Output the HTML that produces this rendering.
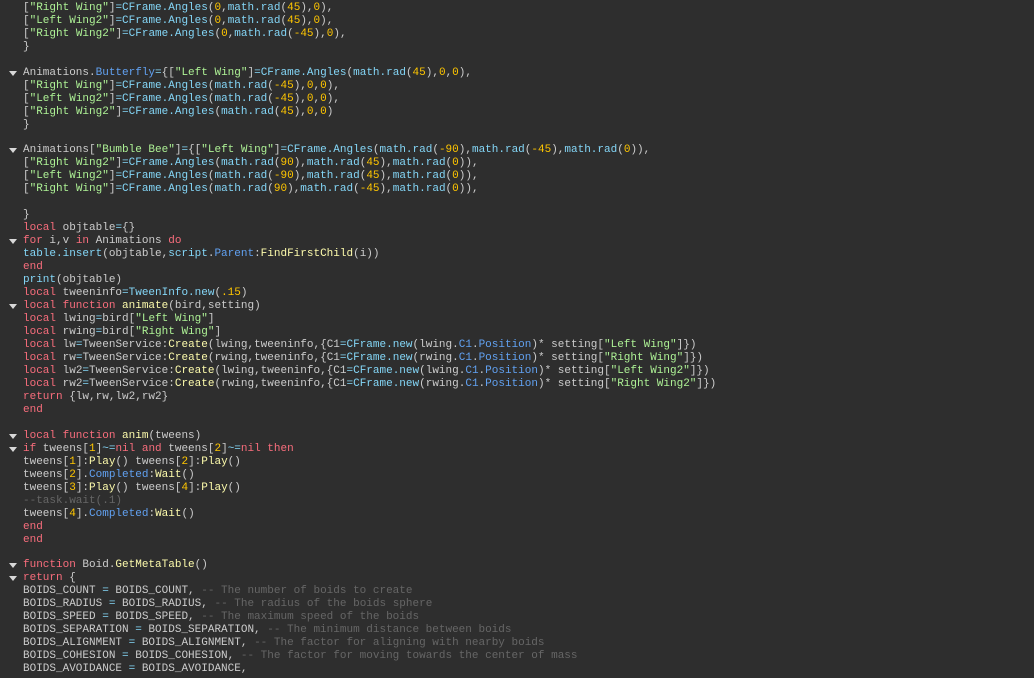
<!DOCTYPE html>
<html><head><meta charset="utf-8"><style>
html,body{margin:0;padding:0;background:#2e2e2e;width:1034px;height:678px;overflow:hidden}
#ed{position:absolute;left:23px;top:1.8px;font-family:"Liberation Mono",monospace;font-size:11px;color:#cccccc}
.l{height:12.97px;line-height:12.97px;position:relative;white-space:pre}
.a:before{content:"";position:absolute;left:-14px;top:4px;border-left:4px solid transparent;border-right:4px solid transparent;border-top:5px solid #d8d8d8}
.k{color:#f86d7c}.s{color:#adf195}.n{color:#ffc600}.b{color:#84d6f7}.p{color:#61a1f1}.f{color:#fdfbac}.c{color:#666666}
</style></head><body><div id="ed">
<div class="l">[<span class="s">"Right Wing"</span>]<span class="b">=CFrame.Angles</span>(<span class="n">0</span>,<span class="b">math.rad</span>(<span class="n">45</span>),<span class="n">0</span>),</div>
<div class="l">[<span class="s">"Left Wing2"</span>]<span class="b">=CFrame.Angles</span>(<span class="n">0</span>,<span class="b">math.rad</span>(<span class="n">45</span>),<span class="n">0</span>),</div>
<div class="l">[<span class="s">"Right Wing2"</span>]<span class="b">=CFrame.Angles</span>(<span class="n">0</span>,<span class="b">math.rad</span>(<span class="n">-45</span>),<span class="n">0</span>),</div>
<div class="l">}</div>
<div class="l"> </div>
<div class="l a">Animations.<span class="p">Butterfly</span><span class="b">=</span>{[<span class="s">"Left Wing"</span>]<span class="b">=CFrame.Angles</span>(<span class="b">math.rad</span>(<span class="n">45</span>),<span class="n">0</span>,<span class="n">0</span>),</div>
<div class="l">[<span class="s">"Right Wing"</span>]<span class="b">=CFrame.Angles</span>(<span class="b">math.rad</span>(<span class="n">-45</span>),<span class="n">0</span>,<span class="n">0</span>),</div>
<div class="l">[<span class="s">"Left Wing2"</span>]<span class="b">=CFrame.Angles</span>(<span class="b">math.rad</span>(<span class="n">-45</span>),<span class="n">0</span>,<span class="n">0</span>),</div>
<div class="l">[<span class="s">"Right Wing2"</span>]<span class="b">=CFrame.Angles</span>(<span class="b">math.rad</span>(<span class="n">45</span>),<span class="n">0</span>,<span class="n">0</span>)</div>
<div class="l">}</div>
<div class="l"> </div>
<div class="l a">Animations[<span class="s">"Bumble Bee"</span>]<span class="b">=</span>{[<span class="s">"Left Wing"</span>]<span class="b">=CFrame.Angles</span>(<span class="b">math.rad</span>(<span class="n">-90</span>),<span class="b">math.rad</span>(<span class="n">-45</span>),<span class="b">math.rad</span>(<span class="n">0</span>)),</div>
<div class="l">[<span class="s">"Right Wing2"</span>]<span class="b">=CFrame.Angles</span>(<span class="b">math.rad</span>(<span class="n">90</span>),<span class="b">math.rad</span>(<span class="n">45</span>),<span class="b">math.rad</span>(<span class="n">0</span>)),</div>
<div class="l">[<span class="s">"Left Wing2"</span>]<span class="b">=CFrame.Angles</span>(<span class="b">math.rad</span>(<span class="n">-90</span>),<span class="b">math.rad</span>(<span class="n">45</span>),<span class="b">math.rad</span>(<span class="n">0</span>)),</div>
<div class="l">[<span class="s">"Right Wing"</span>]<span class="b">=CFrame.Angles</span>(<span class="b">math.rad</span>(<span class="n">90</span>),<span class="b">math.rad</span>(<span class="n">-45</span>),<span class="b">math.rad</span>(<span class="n">0</span>)),</div>
<div class="l"> </div>
<div class="l">}</div>
<div class="l"><span class="k">local</span> objtable<span class="b">=</span>{}</div>
<div class="l a"><span class="k">for</span> i,v <span class="k">in</span> Animations <span class="k">do</span></div>
<div class="l"><span class="b">table.insert</span>(objtable,<span class="b">script</span>.<span class="p">Parent</span>:<span class="f">FindFirstChild</span>(i))</div>
<div class="l"><span class="k">end</span></div>
<div class="l"><span class="b">print</span>(objtable)</div>
<div class="l"><span class="k">local</span> tweeninfo<span class="b">=TweenInfo.new</span>(<span class="n">.15</span>)</div>
<div class="l a"><span class="k">local function</span> <span class="f">animate</span>(bird,setting)</div>
<div class="l"><span class="k">local</span> lwing<span class="b">=</span>bird[<span class="s">"Left Wing"</span>]</div>
<div class="l"><span class="k">local</span> rwing<span class="b">=</span>bird[<span class="s">"Right Wing"</span>]</div>
<div class="l"><span class="k">local</span> lw<span class="b">=</span>TweenService:<span class="f">Create</span>(lwing,tweeninfo,{C1<span class="b">=CFrame.new</span>(lwing.<span class="p">C1</span>.<span class="p">Position</span>)* setting[<span class="s">"Left Wing"</span>]})</div>
<div class="l"><span class="k">local</span> rw<span class="b">=</span>TweenService:<span class="f">Create</span>(rwing,tweeninfo,{C1<span class="b">=CFrame.new</span>(rwing.<span class="p">C1</span>.<span class="p">Position</span>)* setting[<span class="s">"Right Wing"</span>]})</div>
<div class="l"><span class="k">local</span> lw2<span class="b">=</span>TweenService:<span class="f">Create</span>(lwing,tweeninfo,{C1<span class="b">=CFrame.new</span>(lwing.<span class="p">C1</span>.<span class="p">Position</span>)* setting[<span class="s">"Left Wing2"</span>]})</div>
<div class="l"><span class="k">local</span> rw2<span class="b">=</span>TweenService:<span class="f">Create</span>(rwing,tweeninfo,{C1<span class="b">=CFrame.new</span>(rwing.<span class="p">C1</span>.<span class="p">Position</span>)* setting[<span class="s">"Right Wing2"</span>]})</div>
<div class="l"><span class="k">return</span> {lw,rw,lw2,rw2}</div>
<div class="l"><span class="k">end</span></div>
<div class="l"> </div>
<div class="l a"><span class="k">local function</span> <span class="f">anim</span>(tweens)</div>
<div class="l a"><span class="k">if</span> tweens[<span class="n">1</span>]<span class="b">~=</span><span class="k">nil and</span> tweens[<span class="n">2</span>]<span class="b">~=</span><span class="k">nil then</span></div>
<div class="l">tweens[<span class="n">1</span>]:<span class="f">Play</span>() tweens[<span class="n">2</span>]:<span class="f">Play</span>()</div>
<div class="l">tweens[<span class="n">2</span>].<span class="p">Completed</span>:<span class="f">Wait</span>()</div>
<div class="l">tweens[<span class="n">3</span>]:<span class="f">Play</span>() tweens[<span class="n">4</span>]:<span class="f">Play</span>()</div>
<div class="l"><span class="c">--task.wait(.1)</span></div>
<div class="l">tweens[<span class="n">4</span>].<span class="p">Completed</span>:<span class="f">Wait</span>()</div>
<div class="l"><span class="k">end</span></div>
<div class="l"><span class="k">end</span></div>
<div class="l"> </div>
<div class="l a"><span class="k">function</span> Boid.<span class="f">GetMetaTable</span>()</div>
<div class="l a"><span class="k">return</span> {</div>
<div class="l">BOIDS_COUNT <span class="b">=</span> BOIDS_COUNT, <span class="c">-- The number of boids to create</span></div>
<div class="l">BOIDS_RADIUS <span class="b">=</span> BOIDS_RADIUS, <span class="c">-- The radius of the boids sphere</span></div>
<div class="l">BOIDS_SPEED <span class="b">=</span> BOIDS_SPEED, <span class="c">-- The maximum speed of the boids</span></div>
<div class="l">BOIDS_SEPARATION <span class="b">=</span> BOIDS_SEPARATION, <span class="c">-- The minimum distance between boids</span></div>
<div class="l">BOIDS_ALIGNMENT <span class="b">=</span> BOIDS_ALIGNMENT, <span class="c">-- The factor for aligning with nearby boids</span></div>
<div class="l">BOIDS_COHESION <span class="b">=</span> BOIDS_COHESION, <span class="c">-- The factor for moving towards the center of mass</span></div>
<div class="l">BOIDS_AVOIDANCE <span class="b">=</span> BOIDS_AVOIDANCE,</div>
</div></body></html>
